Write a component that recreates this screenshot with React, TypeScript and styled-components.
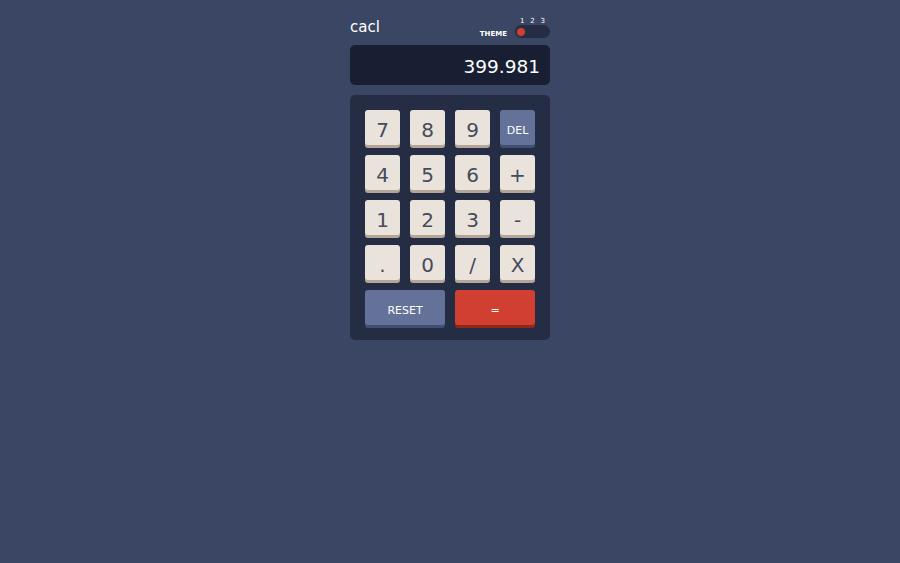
import React, { useState } from "react";
import styled, { createGlobalStyle } from "styled-components";

const Global = createGlobalStyle`
  html, body { margin: 0; padding: 0; background: #3a4663; }
  body { font-family: "DejaVu Sans", "Liberation Sans", sans-serif; }
`;

const Page = styled.div`
  display: flex;
  justify-content: center;
  padding-top: 15px;
`;

const Calc = styled.div`
  width: 200px;
  display: flex;
  flex-direction: column;
`;

const Header = styled.div`
  display: flex;
  justify-content: space-between;
  align-items: flex-end;
  height: 23px;
  margin-bottom: 7px;
`;

const Title = styled.div`
  color: #ffffff;
  font-size: 15px;
  line-height: 20px;
  margin-bottom: 1px;
`;

const ThemeBox = styled.div`
  display: flex;
  align-items: flex-end;
  gap: 8px;
`;

const ThemeLabel = styled.div`
  color: #ffffff;
  font-size: 7px;
  font-weight: bold;
  letter-spacing: 0;
  line-height: 8px;
  margin-bottom: 0;
`;

const Switcher = styled.div`
  display: flex;
  flex-direction: column;
  align-items: stretch;
`;

const Numbers = styled.div`
  display: flex;
  justify-content: space-around;
  padding: 0 2px 0 2px;
  color: #ffffff;
  font-size: 7px;
  line-height: 9px;
  margin-bottom: -1px;
`;

const Track = styled.div`
  width: 35px;
  height: 13px;
  border-radius: 7px;
  background: #242d44;
  position: relative;
`;

const Dot = styled.div<{ $pos: number }>`
  position: absolute;
  top: 2.5px;
  left: ${(p) => 2 + p.$pos * 11.5}px;
  width: 8px;
  height: 8px;
  border-radius: 50%;
  background: #d03f2f;
`;

const Screen = styled.div`
  height: 40px;
  border-radius: 5px;
  background: #181f33;
  color: #ffffff;
  font-size: 18.5px;
  display: flex;
  align-items: center;
  justify-content: flex-end;
  padding: 2px 10px 0;
  box-sizing: border-box;
  margin-bottom: 10px;
`;

const Pad = styled.div`
  background: #242d44;
  border-radius: 5px;
  padding: 15px;
  display: grid;
  grid-template-columns: repeat(4, 35px);
  grid-auto-rows: 35px;
  gap: 10px;
`;

type Kind = "num" | "del" | "eq";

const colors: Record<Kind, { bg: string; sh: string; fg: string }> = {
  num: { bg: "#eae3dc", sh: "#b4a597", fg: "#444b5a" },
  del: { bg: "#647198", sh: "#414e73", fg: "#ffffff" },
  eq: { bg: "#d03f2f", sh: "#93261a", fg: "#ffffff" },
};

const Key = styled.button<{ $kind: Kind; $wide?: boolean }>`
  grid-column: ${(p) => (p.$wide ? "span 2" : "auto")};
  border: none;
  border-radius: 3px;
  margin: 0;
  background: ${(p) => colors[p.$kind].bg};
  color: ${(p) => colors[p.$kind].fg};
  box-shadow: 0 3px 0 ${(p) => colors[p.$kind].sh};
  font-family: "DejaVu Sans", sans-serif;
  font-size: ${(p) => (p.$kind === "num" ? "20px" : "11px")};
  display: flex;
  align-items: center;
  justify-content: center;
  padding: ${(p) => (p.$kind === "num" ? "4px 0 0" : "6px 0 0")};
  cursor: pointer;
`;

export default function App() {
  const [theme] = useState(0);
  const rows: string[] = ["7", "8", "9", "DEL", "4", "5", "6", "+", "1", "2", "3", "-", ".", "0", "/", "X"];
  return (
    <>
      <Global />
      <Page>
        <Calc>
          <Header>
            <Title>cacl</Title>
            <ThemeBox>
              <ThemeLabel>THEME</ThemeLabel>
              <Switcher>
                <Numbers>
                  <span>1</span>
                  <span>2</span>
                  <span>3</span>
                </Numbers>
                <Track>
                  <Dot $pos={theme} />
                </Track>
              </Switcher>
            </ThemeBox>
          </Header>
          <Screen>399.981</Screen>
          <Pad>
            {rows.map((k) => (
              <Key key={k} $kind={k === "DEL" ? "del" : "num"}>
                {k}
              </Key>
            ))}
            <Key $kind="del" $wide>
              RESET
            </Key>
            <Key $kind="eq" $wide>
              =
            </Key>
          </Pad>
        </Calc>
      </Page>
    </>
  );
}
